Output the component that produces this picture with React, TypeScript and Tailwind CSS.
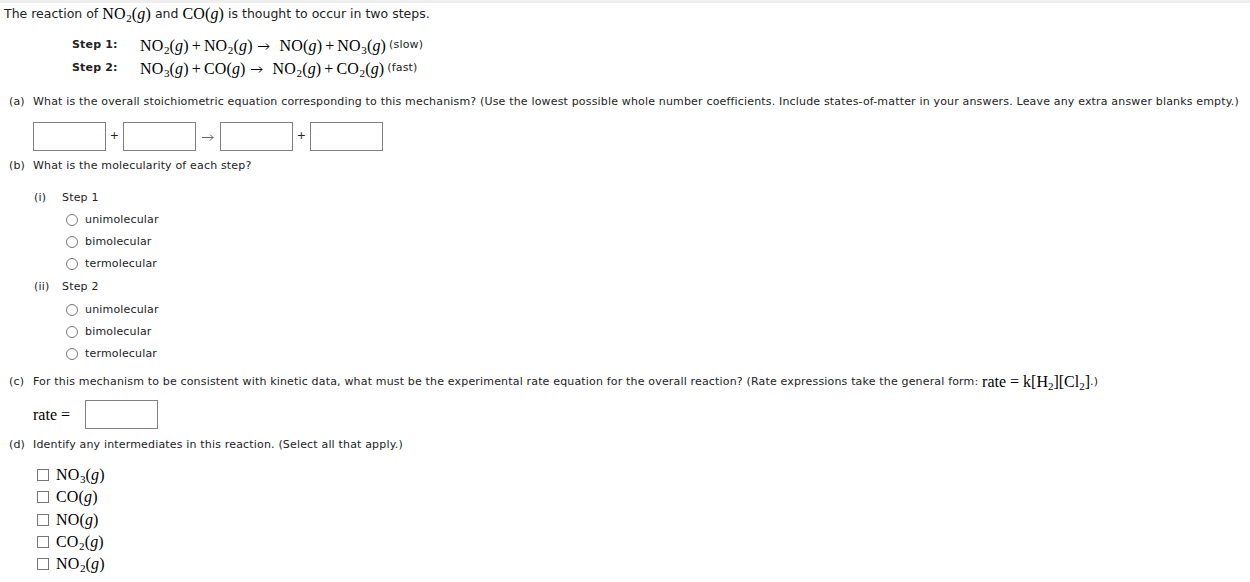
import React from 'react';

const sans = { fontFamily: '"DejaVu Sans", Verdana, sans-serif' };

const Arrow = ({ className = '' }: { className?: string }) => (
  <svg width="12" height="8" viewBox="0 0 12 8" className={className} fill="none" stroke="currentColor" strokeWidth="1">
    <path d="M0 4.5h11" />
    <path d="M8 1.5l3 3-3 3" />
  </svg>
);

// chemical species rendered in math font
const Chem = ({ f, sub }: { f: string; sub?: string }) => (
  <span className="font-['Liberation_Serif',serif] text-[16px] text-black whitespace-nowrap tracking-[0.15px]">
    {f}
    {sub && <sub className="text-[11px] relative top-[3px] align-baseline ml-[0.5px]">{sub}</sub>}
    (<i>g</i>)
  </span>
);

const Plus = () => (
  <span className="font-['Liberation_Serif',serif] text-[16px] text-black mx-[3px]">+</span>
);

const Radio = ({ label }: { label: string }) => (
  <label className="flex items-center h-[22px]">
    <span className="w-[12px] h-[12px] rounded-full border border-[#767676] mr-[7px] bg-white" />
    <span>{label}</span>
  </label>
);

const Box = ({ w = 73 }: { w?: number }) => (
  <div className="h-[29px] border border-[#808080] bg-white" style={{ width: w }} />
);

const Check = ({ f, sub }: { f: string; sub?: string }) => (
  <div className="flex items-center h-[22.3px]">
    <span className="w-[12px] h-[12px] border border-[#767676] mr-[7px] bg-white" />
    <Chem f={f} sub={sub} />
  </div>
);

const Sub = ({ c }: { c: string }) => (
  <sub className="text-[11px] align-baseline relative top-[3px]">{c}</sub>
);

export default function App() {
  return (
    <div
      className="w-[1250px] h-[582px] bg-white text-[#222] text-[11px] tracking-[0.17px] overflow-hidden"
      style={sans}
    >
      <div className="h-[3px] bg-[#eeeeee]" />
      <div className="pl-[4px] pt-[2px] text-[12.5px] tracking-normal flex items-center h-[20px]">
        <span>The reaction of&nbsp;</span>
        <Chem f="NO" sub="2" />
        <span>&nbsp;and&nbsp;</span>
        <Chem f="CO" />
        <span>&nbsp;is thought to occur in two steps.</span>
      </div>

      <div className="pl-[72px] mt-[11px]">
        <div className="flex items-center h-[23px]">
          <span className="w-[68px] font-bold">Step 1:</span>
          <Chem f="NO" sub="2" />
          <Plus />
          <Chem f="NO" sub="2" />
          <Arrow className="ml-[5px] mr-[10px] text-black" />
          <Chem f="NO" />
          <Plus />
          <Chem f="NO" sub="3" />
          <span className="ml-[3px]">(slow)</span>
        </div>
        <div className="flex items-center h-[23px]">
          <span className="w-[68px] font-bold">Step 2:</span>
          <Chem f="NO" sub="3" />
          <Plus />
          <Chem f="CO" />
          <Arrow className="ml-[5px] mr-[10px] text-black" />
          <Chem f="NO" sub="2" />
          <Plus />
          <Chem f="CO" sub="2" />
          <span className="ml-[3px]">(fast)</span>
        </div>
      </div>

      <div className="flex pl-[9px] mt-[12px] h-[20px] items-center">
        <span className="w-[24px]">(a)</span>
        <span>
          What is the overall stoichiometric equation corresponding to this mechanism? (Use the lowest possible whole number
          coefficients. Include states-of-matter in your answers. Leave any extra answer blanks empty.)
        </span>
      </div>

      <div className="flex items-center pl-[33px] mt-[10px]">
        <Box />
        <span className="w-[17px] text-center">+</span>
        <Box />
        <span className="w-[24px] flex justify-center text-[#666]">
          <Arrow />
        </span>
        <Box />
        <span className="w-[17px] text-center">+</span>
        <Box />
      </div>

      <div className="flex pl-[9px] mt-[5px] h-[20px] items-center">
        <span className="w-[24px]">(b)</span>
        <span>What is the molecularity of each step?</span>
      </div>

      <div className="pl-[34px] mt-[12px]">
        <div className="flex h-[21px] items-center">
          <span className="w-[28px]">(i)</span>
          <span>Step 1</span>
        </div>
        <div className="pl-[32px]">
          <Radio label="unimolecular" />
          <Radio label="bimolecular" />
          <Radio label="termolecular" />
        </div>
        <div className="flex h-[24px] items-center">
          <span className="w-[28px]">(ii)</span>
          <span>Step 2</span>
        </div>
        <div className="pl-[32px]">
          <Radio label="unimolecular" />
          <Radio label="bimolecular" />
          <Radio label="termolecular" />
        </div>
      </div>

      <div className="flex pl-[9px] mt-[7px] h-[20px] items-center">
        <span className="w-[24px]">(c)</span>
        <span className="flex items-center whitespace-pre">
          For this mechanism to be consistent with kinetic data, what must be the experimental rate equation for the overall
          reaction? (Rate expressions take the general form:{' '}
          <span className="font-['Liberation_Serif',serif] text-[16px] text-black tracking-normal">
            rate<span className="mx-[4px]">=</span>k[H<Sub c="2" />][Cl<Sub c="2" />]
          </span>
          .)
        </span>
      </div>

      <div className="flex items-center pl-[33px] mt-[8px]">
        <span className="font-['Liberation_Serif',serif] text-[16px] text-black w-[52px] tracking-normal">
          rate<span className="ml-[4px]">=</span>
        </span>
        <Box />
      </div>

      <div className="flex pl-[9px] mt-[6px] h-[20px] items-center">
        <span className="w-[24px]">(d)</span>
        <span>Identify any intermediates in this reaction. (Select all that apply.)</span>
      </div>

      <div className="pl-[37px] mt-[9px]">
        <Check f="NO" sub="3" />
        <Check f="CO" />
        <Check f="NO" />
        <Check f="CO" sub="2" />
        <Check f="NO" sub="2" />
      </div>
    </div>
  );
}
